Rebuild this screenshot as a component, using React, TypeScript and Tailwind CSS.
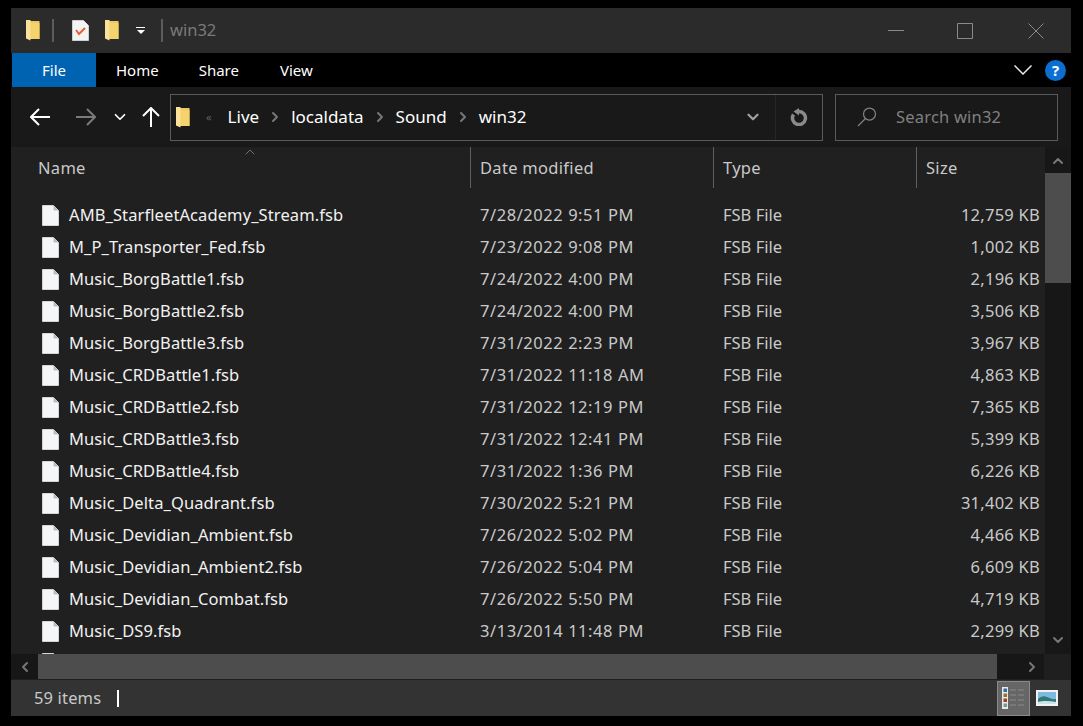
import { ChevronDown, ChevronLeft, ChevronRight, ChevronUp } from 'lucide-react'

const files = [
  ['AMB_StarfleetAcademy_Stream.fsb', '7/28/2022 9:51 PM', '12,759 KB'],
  ['M_P_Transporter_Fed.fsb', '7/23/2022 9:08 PM', '1,002 KB'],
  ['Music_BorgBattle1.fsb', '7/24/2022 4:00 PM', '2,196 KB'],
  ['Music_BorgBattle2.fsb', '7/24/2022 4:00 PM', '3,506 KB'],
  ['Music_BorgBattle3.fsb', '7/31/2022 2:23 PM', '3,967 KB'],
  ['Music_CRDBattle1.fsb', '7/31/2022 11:18 AM', '4,863 KB'],
  ['Music_CRDBattle2.fsb', '7/31/2022 12:19 PM', '7,365 KB'],
  ['Music_CRDBattle3.fsb', '7/31/2022 12:41 PM', '5,399 KB'],
  ['Music_CRDBattle4.fsb', '7/31/2022 1:36 PM', '6,226 KB'],
  ['Music_Delta_Quadrant.fsb', '7/30/2022 5:21 PM', '31,402 KB'],
  ['Music_Devidian_Ambient.fsb', '7/26/2022 5:02 PM', '4,466 KB'],
  ['Music_Devidian_Ambient2.fsb', '7/26/2022 5:04 PM', '6,609 KB'],
  ['Music_Devidian_Combat.fsb', '7/26/2022 5:50 PM', '4,719 KB'],
  ['Music_DS9.fsb', '3/13/2014 11:48 PM', '2,299 KB'],
]

function FolderIcon({ className }: { className?: string }) {
  return (
    <svg viewBox="0 0 14 21" className={className}>
      <path d="M4 1h9.500v18H4z" fill="#efc95f" />
      <path d="M4.500 3H13.500v16H4.500z" fill="#f4d26c" />
      <path d="M0 0h4.500v20.500L0 18.500z" fill="#fae29a" />
    </svg>
  )
}

function FileIcon() {
  return (
    <svg viewBox="0 0 17 21" className="h-[21px] w-[17px] shrink-0">
      <path d="M0.5 0.5h11l5 5v15h-16z" fill="#f5f6f7" stroke="#d4d4d4" />
      <path d="M11.500 0.5v5h5z" fill="#bdbdbd" />
    </svg>
  )
}

function Arrow({ dir, className }: { dir: 'left' | 'right' | 'up'; className?: string }) {
  const d = dir === 'left' ? 'M1 10h19M9 2l-8 8 8 8' : dir === 'right' ? 'M0 10h19M11 2l8 8-8 8' : 'M10 20V1M2 9l8-8 8 8'
  return (
    <svg viewBox="0 0 20 21" className={className} fill="none" stroke="currentColor" strokeWidth="2">
      <path d={d} />
    </svg>
  )
}

function ListViewIcon() {
  return (
    <svg viewBox="0 0 24 22" className="h-[22px] w-6">
      <rect x="0" y="0" width="6" height="22" fill="#e8e8e8" />
      <rect x="1.500" y="1.500" width="3.500" height="3.500" fill="#2f6d9e" />
      <rect x="1.500" y="6.500" width="3.500" height="3.500" fill="#8a7a2a" />
      <rect x="1.500" y="11.500" width="3.500" height="3.500" fill="#a33a22" />
      <rect x="1.500" y="16.500" width="3.500" height="3.500" fill="#6fa08a" />
      <path d="M8 3h6M16 3h6M8 8h6M16 8h6M8 13h6M16 13h6M8 18h6M16 18h6" stroke="#8a8a8a" strokeWidth="1" />
    </svg>
  )
}

function ThumbIcon() {
  return (
    <svg viewBox="0 0 22 16" className="h-4 w-[22px]">
      <rect width="22" height="16" fill="#f2f2f2" />
      <rect x="2" y="2" width="18" height="12" fill="#7fb8e0" />
      <path d="M2 9c3-3 6-3.500 9-2s6 2.500 9 2v5H2z" fill="#2f7a72" />
      <path d="M2 12c5-1.500 12-1 18 0v2H2z" fill="#cfe3ef" />
    </svg>
  )
}

function Crumb() {
  return <ChevronRight className="mx-2 size-[16px] text-[#777]" strokeWidth={3} />
}

export default function App() {
  return (
    <div className="h-[726px] w-[1083px] overflow-hidden bg-black pt-2 pl-[11px] font-['Noto_Sans','Open_Sans',sans-serif] text-white">
      <div className="flex h-[708px] w-[1060px] flex-col bg-[#2b2b2b]">
        {/* title bar */}
        <div className="flex h-[45px] shrink-0 items-center pl-[15px]">
          <FolderIcon className="h-[21px] w-[14px]" />
          <div className="ml-3 h-[23px] w-[2px] bg-[#5c5c5c]" />
          <svg viewBox="0 0 17 21" className="ml-[18px] h-[21px] w-[17px]">
            <path d="M0.5 0.5h11l5 5v15h-16z" fill="#f4f4f4" stroke="#cfcfcf" />
            <path d="M4 10l3 4 6-6" fill="none" stroke="#e8602c" strokeWidth="2" />
          </svg>
          <FolderIcon className="ml-4 h-[21px] w-[14px]" />
          <div className="ml-4 flex w-[11px] flex-col items-center gap-[2px]">
            <div className="h-px w-[9px] bg-white" />
            <div className="h-0 w-0 border-x-[4px] border-t-[4px] border-x-transparent border-t-white" />
          </div>
          <div className="ml-[15px] h-[23px] w-[2px] bg-[#5c5c5c]" />
          <span className="ml-[7px] text-[16.5px] text-[#7a7a7a]">win32</span>
          <div className="ml-auto flex items-center pr-[27px] text-[#8a8a8a]">
            <svg viewBox="0 0 16 16" className="mr-[53px] size-4" stroke="currentColor" fill="none"><path d="M0 7.500h16" /></svg>
            <svg viewBox="0 0 16 16" className="mr-[55px] size-4" stroke="currentColor" fill="none"><path d="M0.5 0.5h15v15h-15z" /></svg>
            <svg viewBox="0 0 16 16" className="size-4" stroke="currentColor" fill="none"><path d="M0.5 0.5l15 15M15.500 0.5l-15 15" /></svg>
          </div>
        </div>

        {/* ribbon tabs */}
        <div className="flex h-[34px] shrink-0 items-center bg-black pl-px text-[15px]">
          <div className="flex h-full w-[84px] items-center justify-center bg-[#0063b1]">File</div>
          <span className="ml-5">Home</span>
          <span className="ml-[40px]">Share</span>
          <span className="ml-[41px]">View</span>
          <svg viewBox="0 0 18 10" className="mr-[13px] ml-auto h-[10px] w-[18px]" fill="none" stroke="#e8e8e8" strokeWidth="1.500"><path d="M0.500 0.500L9 9l8.500-8.500" /></svg>
          <div className="mr-[5px] flex size-[21px] items-center justify-center rounded-full bg-[#0a6fd0] text-[15px] font-bold">?</div>
        </div>

        {/* address toolbar */}
        <div className="flex h-[60px] shrink-0 items-center bg-[#191919] pr-[13px]">
          <Arrow dir="left" className="ml-[19px] h-[21px] w-5" />
          <Arrow dir="right" className="ml-[26px] h-[21px] w-5 text-[#7a7a7a]" />
          <ChevronDown className="ml-[15px] size-[18px]" strokeWidth={2.25} />
          <Arrow dir="up" className="ml-[12px] h-[21px] w-5" />
          <div className="ml-[9px] flex h-[47px] w-[653px] items-center border border-[#5a5a5a] pl-[5px] text-[17px]">
            <FolderIcon className="h-[21px] w-[14px]" />
            <span className="ml-4 text-[11px] text-[#5f5f5f]">«</span>
            <span className="ml-4">Live</span>
            <Crumb />
            <span>localdata</span>
            <Crumb />
            <span>Sound</span>
            <Crumb />
            <span>win32</span>
            <ChevronDown className="mr-[13px] ml-auto size-[18px] text-[#a0a0a0]" strokeWidth={3} />
            <div className="flex h-full w-[47px] items-center justify-center border-l border-[#262626]">
              <svg viewBox="0 0 18 18" className="size-[18px] text-[#8a8a8a]" fill="none" stroke="currentColor" strokeWidth="3.500">
                <path d="M9 3.500A6.500 6.500 0 1 1 3.500 6.500" />
                <path d="M9 0L3.500 3.500 9 7.500z" fill="currentColor" stroke="none" />
              </svg>
            </div>
          </div>
          <div className="ml-auto flex h-[47px] w-[223px] items-center border border-[#5a5a5a] pl-[21px] text-[16.5px] tracking-[0.2px] text-[#808080]">
            <svg viewBox="0 0 20 20" className="size-5" fill="none" stroke="currentColor" strokeWidth="1.250">
              <circle cx="12.500" cy="7" r="6" />
              <path d="M8.500 11.500L1 19" />
            </svg>
            <span className="ml-[19px]">Search win32</span>
          </div>
        </div>

        {/* file list */}
        <div className="flex min-h-0 flex-1 bg-[#202020]">
          <div className="relative min-w-0 flex-1 overflow-hidden pl-px">
            <ChevronUp className="absolute top-[-3px] left-[231px] size-[16px] text-[#9a9a9a]" strokeWidth={1} />
            <div className="grid h-[52px] grid-cols-[459px_243px_203px_1fr] text-[16.5px] tracking-[0.3px] text-[#c9c9c9]">
              <div className="flex h-[41px] items-center border-r border-[#5f5f5f] pt-[2px] pl-[26px]">Name</div>
              <div className="flex h-[41px] items-center border-r border-[#5f5f5f] pt-[2px] pl-[9px]">Date modified</div>
              <div className="flex h-[41px] items-center border-r border-[#5f5f5f] pt-[2px] pl-[9px]">Type</div>
              <div className="flex h-[41px] items-center pt-[2px] pl-[9px]">Size</div>
            </div>
            {[...files, ['', '', '']].map((f, i) => (
              <div key={i} className="grid h-8 grid-cols-[459px_243px_203px_1fr] items-center text-[16.5px]">
                <div className="flex items-center pl-[30px]">
                  <FileIcon />
                  <span className="ml-[10px] tracking-[0.1px] text-[#f2f2f2]">{f[0]}</span>
                </div>
                <div className="pl-[9px] tracking-[0.55px] text-[#c9c9c9]">{f[1]}</div>
                <div className="pl-[9px] text-[#c9c9c9]">{f[1] ? 'FSB File' : ''}</div>
                <div className="pr-[5px] text-right tracking-[0.25px] text-[#c9c9c9]">{f[2]}</div>
              </div>
            ))}
          </div>
          <div className="flex w-[26px] shrink-0 flex-col items-center bg-[#171717]">
            <ChevronUp className="mt-[6px] size-[16px] text-[#777]" strokeWidth={3} />
            <div className="mt-[4px] h-[110px] w-full bg-[#4d4d4d]" />
            <ChevronDown className="mt-auto mb-[6px] size-[16px] text-[#777]" strokeWidth={3} />
          </div>
        </div>

        {/* horizontal scrollbar */}
        <div className="flex h-[25px] shrink-0 items-center bg-[#171717] pl-px">
          <div className="flex w-[26px] justify-center">
            <ChevronLeft className="size-[16px] text-[#777]" strokeWidth={3} />
          </div>
          <div className="h-full w-[959px] bg-[#4d4d4d]" />
          <div className="flex w-[47px] justify-end pr-[4px]">
            <ChevronRight className="size-[16px] text-[#777]" strokeWidth={3} />
          </div>
          <div className="h-full flex-1 bg-[#1f1f1f]" />
        </div>

        {/* status bar */}
        <div className="flex h-[37px] shrink-0 items-center border-t border-[#1f1f1f] bg-[#333333] pl-[23px] text-[16.5px] tracking-[0.15px] text-[#c9c9c9]">
          <span>59 items</span>
          <div className="ml-[16px] h-[17px] w-[2px] bg-white" />
          <div className="ml-auto flex h-[35px] w-[33px] items-center justify-center border border-[#8a8a8a] bg-[#666666]">
            <ListViewIcon />
          </div>
          <div className="mr-[13px] ml-[6px]">
            <ThumbIcon />
          </div>
        </div>
      </div>
    </div>
  )
}
